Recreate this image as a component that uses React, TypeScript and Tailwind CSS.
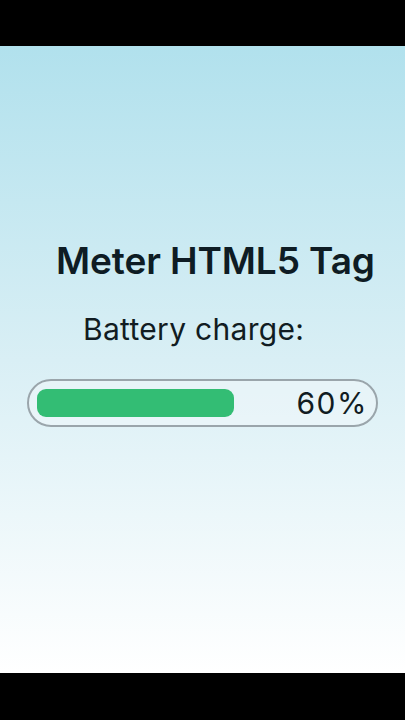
import React from 'react';

// Battery meter demo card
const level = 60;

export default function App() {
  return (
    <div className="w-[405px] h-[720px] bg-black flex flex-col" style={{ fontFamily: 'Inter, "Noto Sans", sans-serif' }}>
      <div className="h-[46px] shrink-0 bg-black" />
      <div className="h-[627px] shrink-0 bg-gradient-to-b from-[#b1e1ed] via-[#d9eff5] to-white flex flex-col">
        <h1 className="mt-[193px] ml-[56px] text-[37px] leading-[44px] font-semibold text-[#0e1c24] tracking-[-0.1px] whitespace-nowrap">
          Meter HTML5 Tag
        </h1>
        <p className="mt-[28px] ml-[83px] text-[30px] leading-[36px] text-[#111c22] tracking-[0.3px] whitespace-nowrap">
          Battery charge:
        </p>
        <div className="mt-[32px] mx-[27px] h-[48px] rounded-full border-2 border-[#9aa5ab] bg-[#eef7fa]/60 flex items-center pl-[8px] pr-[8px]">
          <div className="flex-1 h-[28px]">
            <div className="h-full rounded-[9px] bg-[#33bd74]" style={{ width: `${(level / 100) * 328}px` }} />
          </div>
          <span className="text-[30px] leading-none text-[#111c22] tracking-[1.5px]">{level}%</span>
        </div>
      </div>
      <div className="flex-1 bg-black" />
    </div>
  );
}
